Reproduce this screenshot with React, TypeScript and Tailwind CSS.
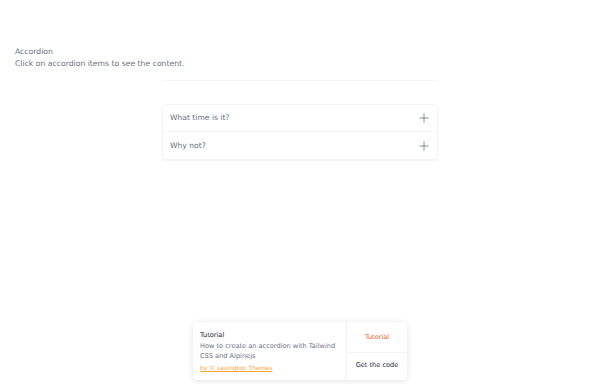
import React from "react";

function Plus() {
  return (
    <svg width="10" height="10" viewBox="0 0 10 10" className="text-gray-500">
      <path d="M5 0.5V9.5M0.5 5H9.5" stroke="currentColor" strokeWidth="0.8" fill="none" />
    </svg>
  );
}

export default function App() {
  return (
    <div className="w-[600px] h-[384px] bg-white relative overflow-hidden" style={{ fontFamily: '"DejaVu Sans", sans-serif' }}>
      <div className="pt-[46px] pl-[15px] text-[7.7px] leading-[12px] text-gray-500">
        <div>Accordion</div>
        <div>Click on accordion items to see the content.</div>
      </div>
      <div className="mx-auto w-[276px] mt-[10px] border-t border-gray-100"></div>
      <div className="mx-auto w-[276px] mt-[23px] rounded-[3px] border border-gray-100 shadow-[0_1px_2px_rgba(0,0,0,0.05)] text-[7.6px] text-gray-500">
        <div className="h-[27px] flex items-center justify-between pl-[7px] pr-[8px] border-b border-gray-100">
          <span>What time is it?</span>
          <Plus />
        </div>
        <div className="h-[27px] flex items-center justify-between pl-[7px] pr-[8px]">
          <span>Why not?</span>
          <Plus />
        </div>
      </div>
      <div className="absolute left-[193px] top-[322px] w-[214px] h-[58px] rounded-[4px] bg-white shadow-[0_1px_6px_rgba(0,0,0,0.12)] flex text-[6.6px]">
        <div className="flex-1 pl-[7px] pr-[4px] pt-[8px] border-r border-gray-100">
          <div className="text-gray-900 leading-[10px]">Tutorial</div>
          <div className="text-gray-500 leading-[10px] mt-[1px]">How to create an accordion with Tailwind CSS and Alpinejs</div>
          <div className="text-orange-400/80 underline leading-[10px] mt-[2px] text-[6px]">by © Lexington Themes</div>
        </div>
        <div className="w-[60px] flex flex-col">
          <div className="flex-1 flex items-center justify-center pt-[2px] text-orange-600/90 border-b border-gray-100">Tutorial</div>
          <div className="flex-1 flex items-center justify-center text-gray-800">Get the code</div>
        </div>
      </div>
    </div>
  );
}
